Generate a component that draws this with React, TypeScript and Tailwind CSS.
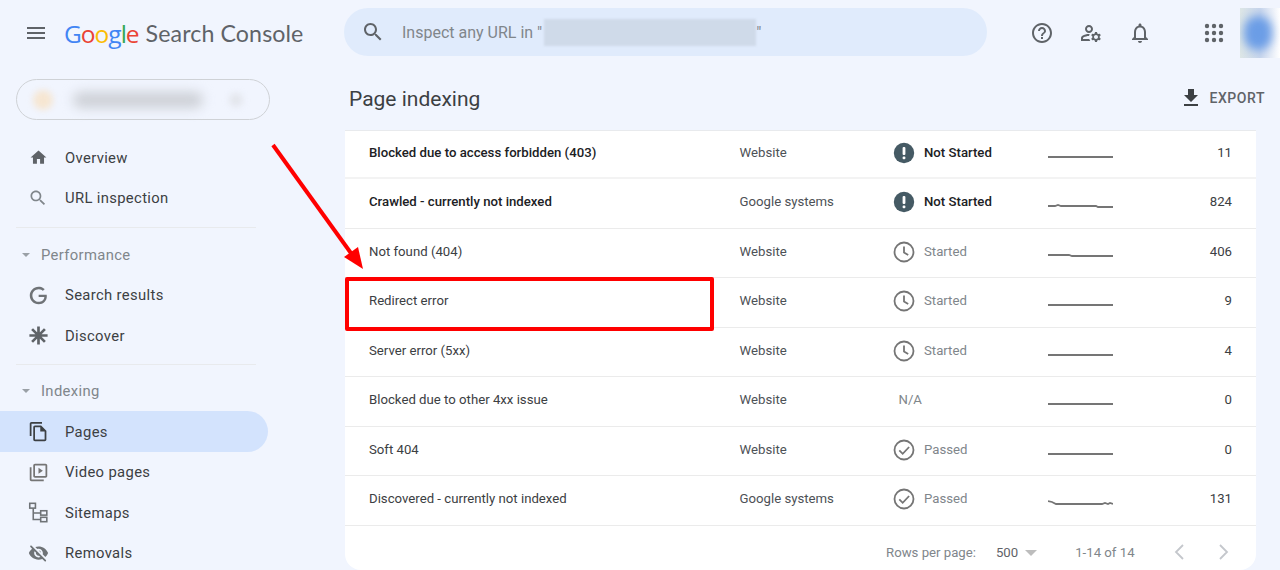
import type { ReactNode } from "react";

const roboto = "font-['Roboto',sans-serif]";

function Icon({ d, className = "w-6 h-6", fill = "#5f6368" }: { d: string | string[]; className?: string; fill?: string }) {
  const paths = Array.isArray(d) ? d : [d];
  return (
    <svg viewBox="0 0 24 24" className={`shrink-0 ${className}`} fill={fill}>
      {paths.map((p) => (
        <path key={p} d={p} />
      ))}
    </svg>
  );
}

const icons = {
  menu: "M3 18h18v-2H3v2zm0-5h18v-2H3v2zm0-7v2h18V6H3z",
  search:
    "M15.5 14h-.79l-.28-.27C15.41 12.59 16 11.11 16 9.5 16 5.91 13.09 3 9.5 3S3 5.91 3 9.5 5.91 16 9.5 16c1.61 0 3.09-.59 4.23-1.57l.27.28v.79l5 4.99L20.49 19l-4.99-5zm-6 0C7.01 14 5 11.99 5 9.5S7.01 5 9.5 5 14 7.01 14 9.5 11.99 14 9.5 14z",
  help: "M11 18h2v-2h-2v2zm1-16C6.48 2 2 6.48 2 12s4.48 10 10 10 10-4.48 10-10S17.52 2 12 2zm0 18c-4.41 0-8-3.59-8-8s3.59-8 8-8 8 3.59 8 8-3.59 8-8 8zm0-14c-2.21 0-4 1.79-4 4h2c0-1.1.9-2 2-2s2 .9 2 2c0 2-3 1.75-3 5h2c0-2.25 3-2.5 3-5 0-2.21-1.79-4-4-4z",
  bell: "M12 22c1.1 0 2-.9 2-2h-4c0 1.1.9 2 2 2zm6-6v-5c0-3.07-1.63-5.64-4.5-6.32V4c0-.83-.67-1.5-1.5-1.5s-1.5.67-1.5 1.5v.68C7.64 5.36 6 7.92 6 11v5l-2 2v1h16v-1l-2-2zm-2 1H8v-6c0-2.48 1.51-4.5 4-4.5s4 2.02 4 4.5v6z",
  manage: [
    "M4 18v-.65c0-.34.16-.66.41-.81C6.1 15.53 8.03 15 10 15c.03 0 .05 0 .08.01.1-.7.3-1.37.59-1.98-.22-.02-.44-.03-.67-.03-2.42 0-4.68.67-6.61 1.82-.88.52-1.39 1.5-1.39 2.53V20h9.26c-.42-.6-.75-1.28-.97-2H4z",
    "M10 12c2.21 0 4-1.79 4-4s-1.79-4-4-4-4 1.79-4 4 1.79 4 4 4zm0-6c1.1 0 2 .9 2 2s-.9 2-2 2-2-.9-2-2 .9-2 2-2z",
    "M20.75 16c0-.22-.03-.42-.06-.63l1.14-1.01-1-1.73-1.45.49c-.32-.27-.68-.48-1.08-.63L18 11h-2l-.3 1.49c-.4.15-.76.36-1.08.63l-1.45-.49-1 1.73 1.14 1.01c-.03.21-.06.41-.06.63s.03.42.06.63l-1.14 1.01 1 1.73 1.45-.49c.32.27.68.48 1.08.63L16 21h2l.3-1.49c.4-.15.76-.36 1.08-.63l1.45.49 1-1.73-1.14-1.01c.03-.21.06-.41.06-.63zM17 18c-1.1 0-2-.9-2-2s.9-2 2-2 2 .9 2 2-.9 2-2 2z",
  ],
  home: "M10 20v-6h4v6h5v-8h3L12 3 2 12h3v8z",
  google:
    "M21.35 11.1h-9.17v2.73h6.51c-.33 3.81-3.5 5.44-6.5 5.44C8.36 19.27 5 16.25 5 12c0-4.1 3.2-7.27 7.2-7.27 3.09 0 4.9 1.97 4.9 1.97L19 4.72S16.56 2 12.1 2C6.42 2 2.03 6.8 2.03 12c0 5.05 4.13 10 10.22 10 5.35 0 9.25-3.67 9.25-9.09 0-1.15-.15-1.81-.15-1.81z",
  pages:
    "M16 1H4c-1.1 0-2 .9-2 2v14h2V3h12V1zm-1 4H8c-1.1 0-1.99.9-1.99 2L6 21c0 1.1.89 2 1.99 2H19c1.1 0 2-.9 2-2V11l-6-6zM8 21V7h6v5h5v9H8z",
  video:
    "M4 6H2v14c0 1.1.9 2 2 2h14v-2H4V6zm16-4H8c-1.1 0-2 .9-2 2v12c0 1.1.9 2 2 2h12c1.1 0 2-.9 2-2V4c0-1.1-.9-2-2-2zm0 14H8V4h12v12zM12 6.5v7l5-3.5z",
  removals:
    "M12 6.5c2.76 0 5 2.24 5 5 0 .51-.1 1-.24 1.46l3.06 3.06c1.39-1.23 2.49-2.77 3.18-4.53C21.27 7.11 17 4 12 4c-1.27 0-2.49.2-3.64.57l2.17 2.17c.47-.14.96-.24 1.47-.24zM2.71 3.16c-.39.39-.39 1.02 0 1.41l1.97 1.97C3.06 7.83 1.77 9.53 1 11.5 2.73 15.89 7 19 12 19c1.52 0 2.97-.3 4.31-.82l2.72 2.72c.39.39 1.02.39 1.41 0 .39-.39.39-1.02 0-1.41L4.13 3.16c-.39-.39-1.03-.39-1.42 0zM12 16.5c-2.76 0-5-2.24-5-5 0-.77.18-1.5.49-2.14l1.57 1.57c-.03.18-.06.37-.06.57 0 1.66 1.34 3 3 3 .2 0 .38-.03.57-.07L14.14 16c-.65.32-1.37.5-2.14.5zm2.97-5.33c-.15-1.4-1.25-2.49-2.64-2.64l2.64 2.64z",
  download: "M19 9h-4V3H9v6H5l7 7 7-7zM5 18v2h14v-2H5z",
};

function AppsIcon() {
  const dots = [5, 12, 19];
  return (
    <svg viewBox="0 0 24 24" className="w-6 h-6" fill="#5f6368">
      {dots.map((y) => dots.map((x) => <circle key={`${x}-${y}`} cx={x} cy={y} r="2.2" />))}
    </svg>
  );
}

function DiscoverIcon() {
  return (
    <svg viewBox="0 0 24 24" className="w-[23px] h-[23px] shrink-0" stroke="#5f6368" strokeWidth="2.8">
      <path d="M12 2.5v19M2.5 12h19M5.3 5.3l13.4 13.4M18.7 5.3L5.3 18.7" />
    </svg>
  );
}

function SitemapIcon() {
  return (
    <svg viewBox="0 0 24 24" className="w-[21px] h-[21px] shrink-0" fill="none" stroke="#6f7377" strokeWidth="1.8">
      <rect x="2" y="1.5" width="6.5" height="5.5" />
      <rect x="14.5" y="10" width="7" height="5" />
      <rect x="14.5" y="17.5" width="7" height="5" />
      <path d="M6 7v13h8.5M6 12.5h8.5" />
    </svg>
  );
}

function NavRow({ icon, label, active }: { icon: ReactNode; label: string; active?: boolean }) {
  return (
    <div className={`h-[40.5px] w-[268px] flex items-center pl-[27px] pt-[1px] rounded-r-full ${active ? "bg-[#d3e3fd]" : ""}`}>
      <div className="w-[22px] mr-[16px] flex justify-center">{icon}</div>
      <span className="text-[14.8px] tracking-[0.35px] text-[#3c4043]">{label}</span>
    </div>
  );
}

function NavHeader({ label }: { label: string }) {
  return (
    <div className="h-[40.5px] flex items-center pl-[22px] pt-[1px]">
      <span className="w-0 h-0 border-x-[4px] border-x-transparent border-t-[4px] border-t-[#9aa0a6] mr-[11px]" />
      <span className="text-[14.8px] tracking-[0.35px] text-[#80868b]">{label}</span>
    </div>
  );
}

function Divider() {
  return <div className="ml-[16px] w-[240px] h-px bg-[#e8eaed]" />;
}

function Sidebar() {
  return (
    <aside className="w-[345px] shrink-0 pt-[13px]">
      <div className="ml-[16px] w-[254px] h-[41px] rounded-full border border-[#cfd2d6] flex items-center px-[16px] mb-[17px]">
        <div className="w-[20px] h-[20px] rounded-full bg-[#f6e6d2] blur-[3px]" />
        <div className="ml-[20px] w-[130px] h-[16px] rounded-full bg-[#cdd0d6] blur-[6px]" />
        <div className="ml-[26px] w-[14px] h-[14px] rounded-full bg-[#e3e6ec] blur-[3px]" />
      </div>
      <NavRow icon={<Icon d={icons.home} className="w-[19px] h-[19px]" fill="#5f6368" />} label="Overview" />
      <NavRow icon={<Icon d={icons.search} className="w-[20px] h-[20px]" fill="#80868b" />} label="URL inspection" />
      <div className="h-[8.5px]" />
      <Divider />
      <div className="h-[6.5px]" />
      <NavHeader label="Performance" />
      <NavRow icon={<Icon d={icons.google} className="w-[21px] h-[21px]" fill="#6f7377" />} label="Search results" />
      <NavRow icon={<DiscoverIcon />} label="Discover" />
      <div className="h-[8.5px]" />
      <Divider />
      <div className="h-[5.5px]" />
      <NavHeader label="Indexing" />
      <NavRow active icon={<Icon d={icons.pages} className="w-[21px] h-[21px]" fill="#3c4043" />} label="Pages" />
      <NavRow icon={<Icon d={icons.video} className="w-[21px] h-[21px]" fill="#757575" />} label="Video pages" />
      <NavRow icon={<SitemapIcon />} label="Sitemaps" />
      <NavRow icon={<Icon d={icons.removals} className="w-[21px] h-[21px]" fill="#6f7377" />} label="Removals" />
    </aside>
  );
}

function Header() {
  return (
    <header className="h-[66px] flex items-start">
      <div className="w-[344px] shrink-0 h-[66px] flex items-center pl-[24px]">
        <Icon d={icons.menu} fill="#5f6368" />
        <div className="flex items-center mt-[2px]">
          <span className="ml-[16px] text-[24.5px] font-medium font-['Open_Sans',sans-serif] tracking-[-1px] leading-none">
            <span className="text-[#4285f4]">G</span>
            <span className="text-[#ea4335]">o</span>
            <span className="text-[#fbbc05]">o</span>
            <span className="text-[#4285f4]">g</span>
            <span className="text-[#34a853]">l</span>
            <span className="text-[#ea4335]">e</span>
          </span>
          <span className="ml-[7px] text-[23.2px] font-['Lato',sans-serif] text-[#5f6368] leading-none tracking-[0.1px]">Search Console</span>
        </div>
      </div>
      <div className="mt-[8px] w-[643px] h-[48px] rounded-full bg-[#e0ebfc] flex items-center pl-[17px]">
        <Icon d={icons.search} fill="#5f6368" />
        <span className={`ml-[17px] pt-[2px] text-[16px] text-[#80868b] ${roboto}`}>Inspect any URL in "</span>
        <div className="ml-[2px] w-[212px] h-[27px] bg-[#cfdae9] blur-[1px]" />
        <span className={`pt-[2px] text-[16px] text-[#80868b] ${roboto}`}>"</span>
      </div>
      <div className="h-[66px] flex items-center ml-[43px]">
        <Icon d={icons.help} />
        <div className="ml-[25px]">
          <Icon d={icons.manage} />
        </div>
        <div className="ml-[25px]">
          <Icon d={icons.bell} />
        </div>
        <div className="ml-[50px]">
          <AppsIcon />
        </div>
        <div className="ml-[14px] w-[40px] h-[50px] overflow-hidden bg-gradient-to-r from-[#dde6e6] via-[#c9d6ec] to-white flex items-center">
          <div className="ml-[4px] w-[28px] h-[34px] rounded-full bg-[#6b9de6] blur-[5px]" />
        </div>
      </div>
    </header>
  );
}

function Spark({ points }: { points: string }) {
  return (
    <svg viewBox="0 0 65 12" className="w-[65px] h-[12px] mt-[8px]" fill="none" stroke="#757575" strokeWidth="1.8">
      <polyline points={points} />
    </svg>
  );
}

const flat = "0,6 65,6";

function StatusIcon({ kind }: { kind: string }) {
  if (kind === "Not Started") {
    return (
      <svg viewBox="0 0 22 22" className="w-[22px] h-[22px]">
        <circle cx="11" cy="11" r="10.2" fill="#455a64" />
        <rect x="9.6" y="5" width="2.8" height="8" rx="1" fill="#fff" />
        <rect x="9.6" y="14.4" width="2.8" height="2.8" rx="1" fill="#fff" />
      </svg>
    );
  }
  return (
    <svg viewBox="0 0 22 22" className="w-[22px] h-[22px]" fill="none" stroke="#757575" strokeWidth="1.8">
      <circle cx="11" cy="11" r="9.5" />
      {kind === "Started" ? <path d="M11 5.5V11.4l4.2 2.6" /> : <path d="M6.3 11.4l3.4 3.4 6.4-6.8" />}
    </svg>
  );
}

const rows = [
  { reason: "Blocked due to access forbidden (403)", source: "Website", status: "Not Started", count: "11", spark: flat },
  {
    reason: "Crawled - currently not indexed",
    source: "Google systems",
    status: "Not Started",
    count: "824",
    spark: "0,6 7,6 10,5 13,6 48,6 50,7 65,7",
  },
  { reason: "Not found (404)", source: "Website", status: "Started", count: "406", spark: "0,5 21,5 24,6 65,6" },
  { reason: "Redirect error", source: "Website", status: "Started", count: "9", spark: flat },
  { reason: "Server error (5xx)", source: "Website", status: "Started", count: "4", spark: flat },
  { reason: "Blocked due to other 4xx issue", source: "Website", status: "N/A", count: "0", spark: flat },
  { reason: "Soft 404", source: "Website", status: "Passed", count: "0", spark: flat },
  {
    reason: "Discovered - currently not indexed",
    source: "Google systems",
    status: "Passed",
    count: "131",
    spark: "0,4 4,5 8,7 54,7 57,6 60,7 62,6 65,7",
  },
];

function Table() {
  return (
    <div className={`mr-[24px] h-[440px] bg-white rounded-b-[16px] border-t border-[#e8eaed] ${roboto} text-[13.2px]`}>
      {rows.map((r, i) => {
        const strong = r.status === "Not Started";
        return (
          <div
            key={r.reason}
            className={`flex items-center pb-[2px] ${i === 0 ? "h-[48px] pb-[3px] border-b-2 border-[#f3f3f3]" : "h-[49.5px] border-b border-[#ebebeb]"}`}
          >
            <div className={`w-[394.5px] pl-[24px] ${strong ? "font-medium text-[#202124]" : "text-[#3c4043]"}`}>{r.reason}</div>
            <div className="w-[153px] text-[#4d5156]">{r.source}</div>
            <div className="w-[155.5px] flex items-center">
              {r.status === "N/A" ? (
                <span className="pl-[6px] text-[#80868b]">N/A</span>
              ) : (
                <>
                  <StatusIcon kind={r.status} />
                  <span className={`ml-[9.5px] ${strong ? "font-medium text-[#202124]" : "text-[#80868b]"}`}>{r.status}</span>
                </>
              )}
            </div>
            <Spark points={r.spark} />
            <div className="flex-1 text-right pr-[24px] text-[#3c4043]">{r.count}</div>
          </div>
        );
      })}
      <div className="h-[44px] flex items-center text-[13.2px] text-[#80868b] pt-[10px]">
        <span className="ml-[541px]">Rows per page:</span>
        <span className="ml-[20px] text-[#5f6368]">500</span>
        <span className="ml-[7px] w-0 h-0 border-x-[6px] border-x-transparent border-t-[6px] border-t-[#bdbdbd]" />
        <span className="ml-[38px]">1-14 of 14</span>
        <svg viewBox="0 0 12 16" className="ml-[38px] w-[12px] h-[16px] -mt-[2px]" fill="none" stroke="#c4c7cc" strokeWidth="1.8">
          <path d="M10 1L3 8l7 7" />
        </svg>
        <svg viewBox="0 0 12 16" className="ml-[33px] w-[12px] h-[16px] -mt-[2px]" fill="none" stroke="#c4c7cc" strokeWidth="1.8">
          <path d="M2 1l7 7-7 7" />
        </svg>
      </div>
    </div>
  );
}

function Annotation() {
  return (
    <>
      <svg viewBox="0 0 1280 570" className="absolute inset-0 w-[1280px] h-[570px] pointer-events-none">
        <line x1="273" y1="145" x2="353" y2="256" stroke="#ff0000" strokeWidth="4" />
        <polygon points="363,269 344,257 358,247" fill="#ff0000" />
      </svg>
      <div className="absolute left-[345px] top-[277px] w-[369px] h-[54px] border-[4px] border-[#ff0000] rounded-[2px]" />
    </>
  );
}

export default function App() {
  return (
    <div className={`relative w-[1280px] h-[570px] overflow-hidden bg-[#f1f5fe] ${roboto}`}>
      <Header />
      <div className="flex">
        <Sidebar />
        <main className="flex-1 min-w-0">
          <div className="h-[64px] flex items-center justify-between pr-[15px] pl-[4px]">
            <h1 className="text-[21px] text-[#3c4043] font-normal pt-[3px]">Page indexing</h1>
            <div className="flex items-center">
              <Icon d={icons.download} fill="#3c4043" />
              <span className="ml-[7px] text-[14px] font-medium tracking-[0.55px] text-[#5f6368]">EXPORT</span>
            </div>
          </div>
          <Table />
        </main>
      </div>
      <Annotation />
    </div>
  );
}
